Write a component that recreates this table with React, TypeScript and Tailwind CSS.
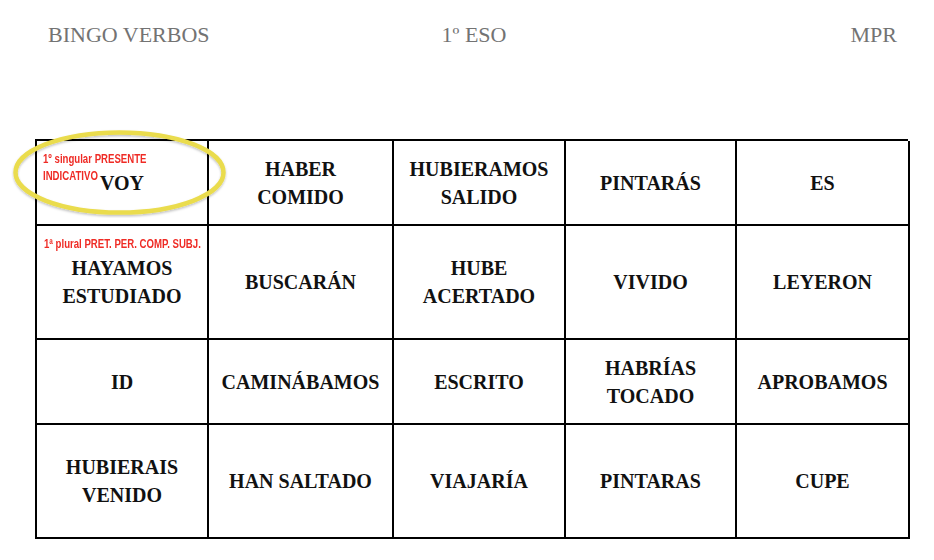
import React from "react";

type Cell = { lines: string[]; note?: string[] };

const rows: Cell[][] = [
  [
    { lines: ["VOY"], note: ["1º singular PRESENTE", "INDICATIVO"] },
    { lines: ["HABER", "COMIDO"] },
    { lines: ["HUBIERAMOS", "SALIDO"] },
    { lines: ["PINTARÁS"] },
    { lines: ["ES"] },
  ],
  [
    { lines: ["HAYAMOS", "ESTUDIADO"], note: ["1ª plural PRET. PER. COMP. SUBJ."] },
    { lines: ["BUSCARÁN"] },
    { lines: ["HUBE", "ACERTADO"] },
    { lines: ["VIVIDO"] },
    { lines: ["LEYERON"] },
  ],
  [
    { lines: ["ID"] },
    { lines: ["CAMINÁBAMOS"] },
    { lines: ["ESCRITO"] },
    { lines: ["HABRÍAS", "TOCADO"] },
    { lines: ["APROBAMOS"] },
  ],
  [
    { lines: ["HUBIERAIS", "VENIDO"] },
    { lines: ["HAN SALTADO"] },
    { lines: ["VIAJARÍA"] },
    { lines: ["PINTARAS"] },
    { lines: ["CUPE"] },
  ],
];

function BingoCell({ cell, first }: { cell: Cell; first: boolean }) {
  return (
    <div className="relative flex flex-col items-center justify-center border-r-2 border-b-2 border-black text-center">
      {cell.note && (
        <div
          className={
            first
              ? "absolute left-[6px] top-[9px] origin-left scale-x-[0.74] whitespace-nowrap text-left text-[13px] leading-[17px] font-bold text-[#ef2b25]"
              : "absolute left-[7px] top-[9px] origin-left scale-x-[0.74] whitespace-nowrap text-left text-[13px] leading-[17px] font-bold text-[#ef2b25]"
          }
          style={{ fontFamily: '"Liberation Sans", sans-serif' }}
        >
          {cell.note.map((n) => (
            <div key={n}>{n}</div>
          ))}
        </div>
      )}
      {cell.lines.map((l) => (
        <div key={l} className="text-[20px] leading-[28px] font-bold text-[#111]">
          {l}
        </div>
      ))}
    </div>
  );
}

export default function App() {
  return (
    <div
      className="relative w-[934px] h-[560px] bg-white overflow-hidden"
      style={{ fontFamily: '"Liberation Serif", serif' }}
    >
      {/* header */}
      <div className="flex items-center pt-[21px] pl-[48px] pr-[37px] text-[22px] leading-[28px] text-[#737373]">
        <span>BINGO VERBOS</span>
        <span className="ml-[232px]">1º ESO</span>
        <span className="ml-auto">MPR</span>
      </div>

      {/* bingo card */}
      <div className="ml-[35px] mt-[90px] grid w-[873px] grid-cols-[172px_185px_172px_171px_173px] grid-rows-[85px_114px_85px_114px] border-l-2 border-t-2 border-black">
        {rows.flat().map((c, i) => (
          <BingoCell key={i} cell={c} first={i === 0} />
        ))}
      </div>

      {/* yellow highlight ring */}
      <svg className="absolute left-[11px] top-[128px]" width="218" height="90" viewBox="0 0 218 90">
        <defs>
          <filter id="sh" x="-10%" y="-10%" width="120%" height="130%">
            <feDropShadow dx="0" dy="1.5" stdDeviation="1.2" floodColor="#000" floodOpacity="0.25" />
          </filter>
        </defs>
        <ellipse cx="108.5" cy="44.5" rx="104" ry="40" fill="none" stroke="#eadc4d" strokeWidth="4.5" filter="url(#sh)" />
      </svg>
    </div>
  );
}
